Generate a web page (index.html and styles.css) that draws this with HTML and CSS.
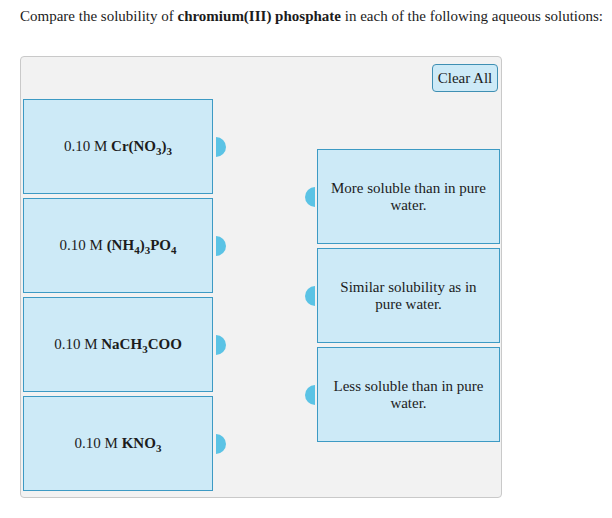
FILE: index.html
```html
<!DOCTYPE html>
<html lang="en">
<head>
<meta charset="utf-8">
<title>Solubility sorting</title>
<link rel="stylesheet" href="styles.css">
</head>
<body>
  <p class="prompt">Compare the solubility of <b>chromium(III) phosphate</b> in each of the following aqueous solutions:</p>

  <div class="board">
    <div class="board-head">
      <button class="clear-btn" type="button">Clear All</button>
    </div>
    <div class="board-body">
      <div class="col col-left">
        <div class="item">
          <div class="card"><span>0.10 M <b>Cr(NO<sub>3</sub>)<sub>3</sub></b></span></div>
          <span class="tab tab-right"></span>
        </div>
        <div class="item">
          <div class="card"><span>0.10 M <b>(NH<sub>4</sub>)<sub>3</sub>PO<sub>4</sub></b></span></div>
          <span class="tab tab-right"></span>
        </div>
        <div class="item">
          <div class="card"><span>0.10 M <b>NaCH<sub>3</sub>COO</b></span></div>
          <span class="tab tab-right"></span>
        </div>
        <div class="item">
          <div class="card"><span>0.10 M <b>KNO<sub>3</sub></b></span></div>
          <span class="tab tab-right"></span>
        </div>
      </div>
      <div class="col col-right">
        <div class="item">
          <span class="tab tab-left"></span>
          <div class="card card-wide"><span>More soluble than in pure water.</span></div>
        </div>
        <div class="item">
          <span class="tab tab-left"></span>
          <div class="card card-wide"><span>Similar solubility as in pure water.</span></div>
        </div>
        <div class="item">
          <span class="tab tab-left"></span>
          <div class="card card-wide"><span>Less soluble than in pure water.</span></div>
        </div>
      </div>
    </div>
  </div>
</body>
</html>
```
FILE: styles.css
```css
* { box-sizing: border-box; }

body {
  margin: 0;
  padding: 7px 0 0 20px;
  font-family: "Liberation Serif", "Times New Roman", serif;
  color: #1c1c1c;
  background: #ffffff;
}

.prompt {
  margin: 0;
  font-size: 15px;
  line-height: 19px;
  white-space: nowrap;
}

.board {
  margin-top: 30px;
  width: 482px;
  height: 442px;
  border: 1px solid #c9c9c9;
  border-radius: 4px;
  background: #f2f2f2;
  padding: 7px 1px 0 2px;
  display: flex;
  flex-direction: column;
}

.board-head {
  display: flex;
  justify-content: flex-end;
  padding-right: 2px;
}

.clear-btn {
  height: 28px;
  width: 66px;
  padding: 0;
  border: 1px solid #3f8fb3;
  border-radius: 4px;
  background: #cdeaf7;
  font-family: "Liberation Serif", "Times New Roman", serif;
  font-size: 15px;
  color: #1c1c1c;
}

.board-body {
  display: flex;
  gap: 79px;
  margin-top: 7px;
}

.col {
  display: flex;
  flex-direction: column;
  gap: 4px;
}

.col-right { margin-top: 50px; }

.item {
  display: flex;
  align-items: center;
  gap: 2px;
}

.col-left .item { gap: 3px; }

.card {
  width: 190px;
  height: 95px;
  border: 1px solid #3d9ac4;
  background: #cdeaf7;
  display: flex;
  align-items: center;
  justify-content: center;
  text-align: center;
  font-size: 15px;
  line-height: 17px;
  padding: 0 8px;
}

.card-wide { width: 183px; }

.card sub {
  font-size: 11px;
  line-height: 0;
  vertical-align: -4px;
}

.tab {
  width: 10px;
  height: 20px;
  background: #5bc3e5;
  flex: none;
}

.tab-right { border-radius: 0 10px 10px 0; }
.tab-left { border-radius: 10px 0 0 10px; }
```
